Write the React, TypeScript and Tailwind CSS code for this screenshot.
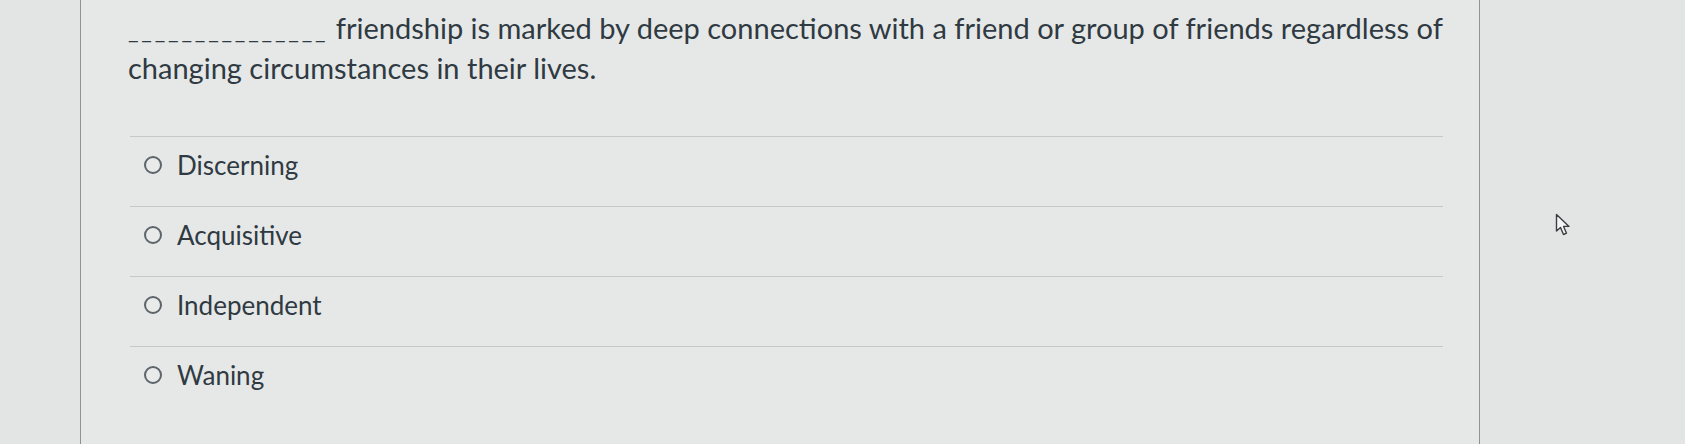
import React from "react";

const options = ["Discerning", "Acquisitive", "Independent", "Waning"];

export default function App() {
  return (
    <div
      className="w-[1685px] h-[444px] overflow-hidden bg-[#e3e5e4] flex"
      style={{ fontFamily: "Lato, 'Open Sans', sans-serif" }}
    >
      <div className="w-[80px] shrink-0" />
      <div className="w-[1400px] shrink-0 h-full border-l border-r border-[#8d9296] bg-[#e6e8e7] pl-[47px] pr-[40px]">
        <div className="pt-[9px] text-[29px] leading-[37px] text-[#2f3a42] w-[1320px]">
          <span className="text-[23px] tracking-[2.8px]">_______________</span> friendship is marked by deep connections with a friend or group of friends regardless of changing circumstances in their lives.
        </div>
        <div className="mt-[50px] w-[1313px] ml-[2px]">
          {options.map((o) => (
            <div key={o} className="border-t border-[#c3c8cb] h-[70px] flex items-center pl-[14px] pb-[14px] gap-[15px]">
              <span className="w-[18px] h-[18px] rounded-full border-2 border-[#5d656a] bg-[#e9ebea]" />
              <span className="text-[26px] text-[#2f3a42] leading-none">{o}</span>
            </div>
          ))}
        </div>
      </div>
      <div className="relative flex-1">
        <svg className="absolute left-[75px] top-[213px]" width="18" height="24" viewBox="0 0 18 24">
          <path d="M1.5 1.5 L1.5 18 L5.5 14.5 L8.5 21.5 L11.5 20.2 L8.6 13.4 L14 13.4 Z" fill="#f4f5f5" stroke="#3a3f43" strokeWidth="1.4" strokeLinejoin="round" />
        </svg>
      </div>
    </div>
  );
}
